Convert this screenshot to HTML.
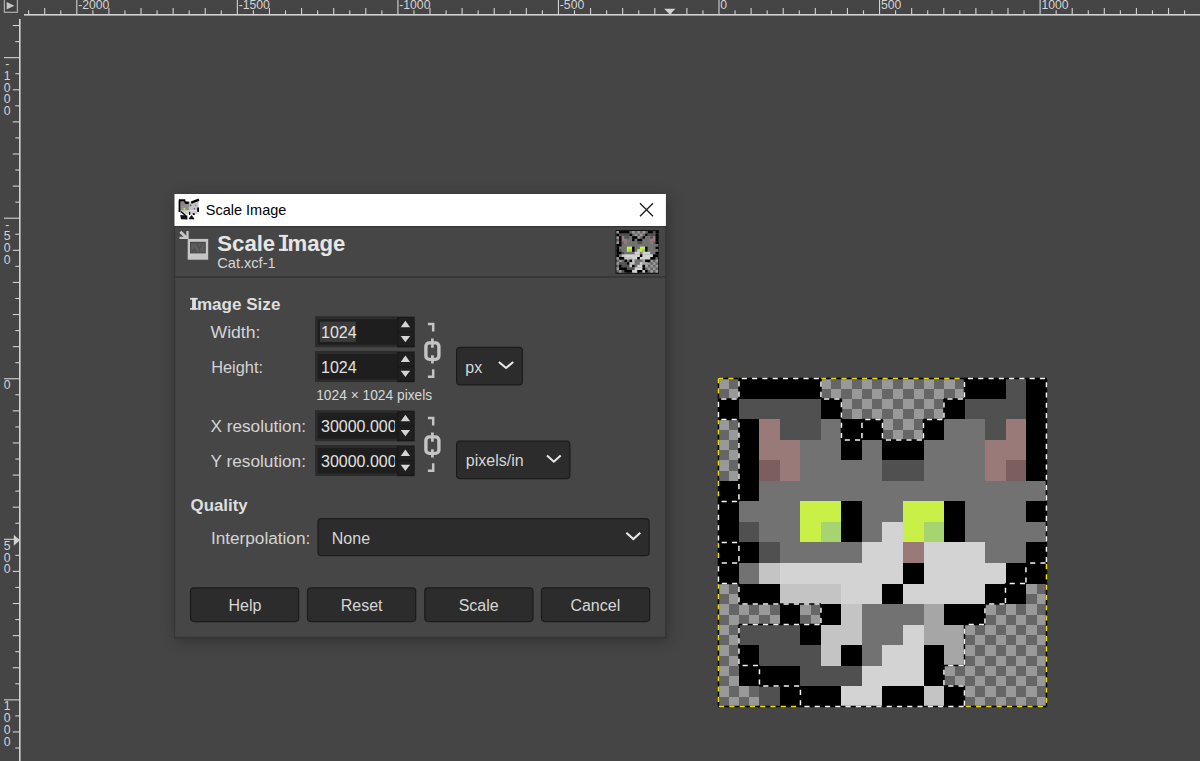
<!DOCTYPE html><html><head><meta charset="utf-8"><title>GIMP Scale Image</title><style>
html,body{margin:0;padding:0;}
body{width:1200px;height:761px;overflow:hidden;background:#454545;position:relative;font-family:"Liberation Sans", sans-serif;}
svg{position:absolute;left:0;top:0;}
.rl{font-size:12.2px;fill:#d4d4d4;font-family:"Liberation Sans", sans-serif;}
.rv{font-size:12.2px;fill:#d4d4d4;font-family:"Liberation Sans", sans-serif;text-anchor:middle;}
.shadow{position:absolute;left:174px;top:194px;width:492px;height:444px;box-shadow:2px 3px 14px rgba(0,0,0,0.28);}
</style></head><body><svg class="rulers" width="1200" height="761"><rect x="24" y="14" width="1176" height="1.6" fill="#d2d2d2"/><rect x="19" y="19" width="1.6" height="742" fill="#d2d2d2"/><rect x="28.09" y="10.3" width="1.1" height="4.20" fill="#d2d2d2"/><rect x="44.14" y="8" width="1.1" height="6.50" fill="#d2d2d2"/><rect x="60.20" y="10.3" width="1.1" height="4.20" fill="#d2d2d2"/><rect x="76.25" y="0" width="1.1" height="14.50" fill="#d2d2d2"/><text x="78.15" y="9.3" class="rl">-2000</text><rect x="92.31" y="10.3" width="1.1" height="4.20" fill="#d2d2d2"/><rect x="108.36" y="8" width="1.1" height="6.50" fill="#d2d2d2"/><rect x="124.42" y="10.3" width="1.1" height="4.20" fill="#d2d2d2"/><rect x="140.47" y="8" width="1.1" height="6.50" fill="#d2d2d2"/><rect x="156.53" y="10.3" width="1.1" height="4.20" fill="#d2d2d2"/><rect x="172.58" y="8" width="1.1" height="6.50" fill="#d2d2d2"/><rect x="188.64" y="10.3" width="1.1" height="4.20" fill="#d2d2d2"/><rect x="204.69" y="8" width="1.1" height="6.50" fill="#d2d2d2"/><rect x="220.75" y="10.3" width="1.1" height="4.20" fill="#d2d2d2"/><rect x="236.80" y="0" width="1.1" height="14.50" fill="#d2d2d2"/><text x="238.70" y="9.3" class="rl">-1500</text><rect x="252.86" y="10.3" width="1.1" height="4.20" fill="#d2d2d2"/><rect x="268.91" y="8" width="1.1" height="6.50" fill="#d2d2d2"/><rect x="284.97" y="10.3" width="1.1" height="4.20" fill="#d2d2d2"/><rect x="301.02" y="8" width="1.1" height="6.50" fill="#d2d2d2"/><rect x="317.08" y="10.3" width="1.1" height="4.20" fill="#d2d2d2"/><rect x="333.13" y="8" width="1.1" height="6.50" fill="#d2d2d2"/><rect x="349.19" y="10.3" width="1.1" height="4.20" fill="#d2d2d2"/><rect x="365.24" y="8" width="1.1" height="6.50" fill="#d2d2d2"/><rect x="381.30" y="10.3" width="1.1" height="4.20" fill="#d2d2d2"/><rect x="397.35" y="0" width="1.1" height="14.50" fill="#d2d2d2"/><text x="399.25" y="9.3" class="rl">-1000</text><rect x="413.41" y="10.3" width="1.1" height="4.20" fill="#d2d2d2"/><rect x="429.46" y="8" width="1.1" height="6.50" fill="#d2d2d2"/><rect x="445.52" y="10.3" width="1.1" height="4.20" fill="#d2d2d2"/><rect x="461.57" y="8" width="1.1" height="6.50" fill="#d2d2d2"/><rect x="477.63" y="10.3" width="1.1" height="4.20" fill="#d2d2d2"/><rect x="493.68" y="8" width="1.1" height="6.50" fill="#d2d2d2"/><rect x="509.74" y="10.3" width="1.1" height="4.20" fill="#d2d2d2"/><rect x="525.79" y="8" width="1.1" height="6.50" fill="#d2d2d2"/><rect x="541.85" y="10.3" width="1.1" height="4.20" fill="#d2d2d2"/><rect x="557.90" y="0" width="1.1" height="14.50" fill="#d2d2d2"/><text x="559.80" y="9.3" class="rl">-500</text><rect x="573.96" y="10.3" width="1.1" height="4.20" fill="#d2d2d2"/><rect x="590.01" y="8" width="1.1" height="6.50" fill="#d2d2d2"/><rect x="606.07" y="10.3" width="1.1" height="4.20" fill="#d2d2d2"/><rect x="622.12" y="8" width="1.1" height="6.50" fill="#d2d2d2"/><rect x="638.18" y="10.3" width="1.1" height="4.20" fill="#d2d2d2"/><rect x="654.23" y="8" width="1.1" height="6.50" fill="#d2d2d2"/><rect x="670.29" y="10.3" width="1.1" height="4.20" fill="#d2d2d2"/><rect x="686.34" y="8" width="1.1" height="6.50" fill="#d2d2d2"/><rect x="702.40" y="10.3" width="1.1" height="4.20" fill="#d2d2d2"/><rect x="718.45" y="0" width="1.1" height="14.50" fill="#d2d2d2"/><text x="720.35" y="9.3" class="rl">0</text><rect x="734.50" y="10.3" width="1.1" height="4.20" fill="#d2d2d2"/><rect x="750.56" y="8" width="1.1" height="6.50" fill="#d2d2d2"/><rect x="766.62" y="10.3" width="1.1" height="4.20" fill="#d2d2d2"/><rect x="782.67" y="8" width="1.1" height="6.50" fill="#d2d2d2"/><rect x="798.73" y="10.3" width="1.1" height="4.20" fill="#d2d2d2"/><rect x="814.78" y="8" width="1.1" height="6.50" fill="#d2d2d2"/><rect x="830.84" y="10.3" width="1.1" height="4.20" fill="#d2d2d2"/><rect x="846.89" y="8" width="1.1" height="6.50" fill="#d2d2d2"/><rect x="862.95" y="10.3" width="1.1" height="4.20" fill="#d2d2d2"/><rect x="879.00" y="0" width="1.1" height="14.50" fill="#d2d2d2"/><text x="880.90" y="9.3" class="rl">500</text><rect x="895.06" y="10.3" width="1.1" height="4.20" fill="#d2d2d2"/><rect x="911.11" y="8" width="1.1" height="6.50" fill="#d2d2d2"/><rect x="927.17" y="10.3" width="1.1" height="4.20" fill="#d2d2d2"/><rect x="943.22" y="8" width="1.1" height="6.50" fill="#d2d2d2"/><rect x="959.28" y="10.3" width="1.1" height="4.20" fill="#d2d2d2"/><rect x="975.33" y="8" width="1.1" height="6.50" fill="#d2d2d2"/><rect x="991.38" y="10.3" width="1.1" height="4.20" fill="#d2d2d2"/><rect x="1007.44" y="8" width="1.1" height="6.50" fill="#d2d2d2"/><rect x="1023.50" y="10.3" width="1.1" height="4.20" fill="#d2d2d2"/><rect x="1039.55" y="0" width="1.1" height="14.50" fill="#d2d2d2"/><text x="1041.45" y="9.3" class="rl">1000</text><rect x="1055.61" y="10.3" width="1.1" height="4.20" fill="#d2d2d2"/><rect x="1071.66" y="8" width="1.1" height="6.50" fill="#d2d2d2"/><rect x="1087.72" y="10.3" width="1.1" height="4.20" fill="#d2d2d2"/><rect x="1103.77" y="8" width="1.1" height="6.50" fill="#d2d2d2"/><rect x="1119.83" y="10.3" width="1.1" height="4.20" fill="#d2d2d2"/><rect x="1135.88" y="8" width="1.1" height="6.50" fill="#d2d2d2"/><rect x="1151.93" y="10.3" width="1.1" height="4.20" fill="#d2d2d2"/><rect x="1167.99" y="8" width="1.1" height="6.50" fill="#d2d2d2"/><rect x="1184.05" y="10.3" width="1.1" height="4.20" fill="#d2d2d2"/><rect x="12.8" y="24.99" width="6.70" height="1.1" fill="#d2d2d2"/><rect x="15.3" y="41.05" width="4.20" height="1.1" fill="#d2d2d2"/><rect x="4" y="57.10" width="15.50" height="1.1" fill="#d2d2d2"/><text x="7.2" y="68.20" class="rv">-</text><text x="7.2" y="79.90" class="rv">1</text><text x="7.2" y="91.60" class="rv">0</text><text x="7.2" y="103.30" class="rv">0</text><text x="7.2" y="115.00" class="rv">0</text><rect x="15.3" y="73.15" width="4.20" height="1.1" fill="#d2d2d2"/><rect x="12.8" y="89.21" width="6.70" height="1.1" fill="#d2d2d2"/><rect x="15.3" y="105.26" width="4.20" height="1.1" fill="#d2d2d2"/><rect x="12.8" y="121.32" width="6.70" height="1.1" fill="#d2d2d2"/><rect x="15.3" y="137.38" width="4.20" height="1.1" fill="#d2d2d2"/><rect x="12.8" y="153.43" width="6.70" height="1.1" fill="#d2d2d2"/><rect x="15.3" y="169.48" width="4.20" height="1.1" fill="#d2d2d2"/><rect x="12.8" y="185.54" width="6.70" height="1.1" fill="#d2d2d2"/><rect x="15.3" y="201.59" width="4.20" height="1.1" fill="#d2d2d2"/><rect x="4" y="217.65" width="15.50" height="1.1" fill="#d2d2d2"/><text x="7.2" y="228.75" class="rv">-</text><text x="7.2" y="240.45" class="rv">5</text><text x="7.2" y="252.15" class="rv">0</text><text x="7.2" y="263.85" class="rv">0</text><rect x="15.3" y="233.70" width="4.20" height="1.1" fill="#d2d2d2"/><rect x="12.8" y="249.76" width="6.70" height="1.1" fill="#d2d2d2"/><rect x="15.3" y="265.81" width="4.20" height="1.1" fill="#d2d2d2"/><rect x="12.8" y="281.87" width="6.70" height="1.1" fill="#d2d2d2"/><rect x="15.3" y="297.92" width="4.20" height="1.1" fill="#d2d2d2"/><rect x="12.8" y="313.98" width="6.70" height="1.1" fill="#d2d2d2"/><rect x="15.3" y="330.03" width="4.20" height="1.1" fill="#d2d2d2"/><rect x="12.8" y="346.09" width="6.70" height="1.1" fill="#d2d2d2"/><rect x="15.3" y="362.14" width="4.20" height="1.1" fill="#d2d2d2"/><rect x="4" y="378.20" width="15.50" height="1.1" fill="#d2d2d2"/><text x="7.2" y="389.30" class="rv">0</text><rect x="15.3" y="394.25" width="4.20" height="1.1" fill="#d2d2d2"/><rect x="12.8" y="410.31" width="6.70" height="1.1" fill="#d2d2d2"/><rect x="15.3" y="426.37" width="4.20" height="1.1" fill="#d2d2d2"/><rect x="12.8" y="442.42" width="6.70" height="1.1" fill="#d2d2d2"/><rect x="15.3" y="458.48" width="4.20" height="1.1" fill="#d2d2d2"/><rect x="12.8" y="474.53" width="6.70" height="1.1" fill="#d2d2d2"/><rect x="15.3" y="490.58" width="4.20" height="1.1" fill="#d2d2d2"/><rect x="12.8" y="506.64" width="6.70" height="1.1" fill="#d2d2d2"/><rect x="15.3" y="522.69" width="4.20" height="1.1" fill="#d2d2d2"/><rect x="4" y="538.75" width="15.50" height="1.1" fill="#d2d2d2"/><text x="7.2" y="549.85" class="rv">5</text><text x="7.2" y="561.55" class="rv">0</text><text x="7.2" y="573.25" class="rv">0</text><rect x="15.3" y="554.80" width="4.20" height="1.1" fill="#d2d2d2"/><rect x="12.8" y="570.86" width="6.70" height="1.1" fill="#d2d2d2"/><rect x="15.3" y="586.91" width="4.20" height="1.1" fill="#d2d2d2"/><rect x="12.8" y="602.97" width="6.70" height="1.1" fill="#d2d2d2"/><rect x="15.3" y="619.02" width="4.20" height="1.1" fill="#d2d2d2"/><rect x="12.8" y="635.08" width="6.70" height="1.1" fill="#d2d2d2"/><rect x="15.3" y="651.13" width="4.20" height="1.1" fill="#d2d2d2"/><rect x="12.8" y="667.19" width="6.70" height="1.1" fill="#d2d2d2"/><rect x="15.3" y="683.25" width="4.20" height="1.1" fill="#d2d2d2"/><rect x="4" y="699.30" width="15.50" height="1.1" fill="#d2d2d2"/><text x="7.2" y="710.40" class="rv">1</text><text x="7.2" y="722.10" class="rv">0</text><text x="7.2" y="733.80" class="rv">0</text><text x="7.2" y="745.50" class="rv">0</text><rect x="15.3" y="715.36" width="4.20" height="1.1" fill="#d2d2d2"/><rect x="12.8" y="731.41" width="6.70" height="1.1" fill="#d2d2d2"/><rect x="15.3" y="747.46" width="4.20" height="1.1" fill="#d2d2d2"/><polygon points="664.2,8.8 675.4,8.8 669.8,14.6" fill="#d2d2d2"/><polygon points="13.8,534.8 13.8,545.7 19.8,540.25" fill="#d2d2d2"/><rect x="4.4" y="-2" width="13" height="14.3" fill="#404040" stroke="#a8a8a8" stroke-width="1.3"/><polygon points="6.6,2 6.6,9.6 14.4,5.8" fill="#c4c4c4"/></svg><svg class="cat" style="left:715px;top:375px" width="335" height="335" ><g shape-rendering="crispEdges"><rect x="3" y="3" width="21" height="21" fill="#666"/><rect x="3" y="3" width="10.5" height="10.5" fill="#999"/><rect x="13.5" y="13.5" width="10.5" height="10.5" fill="#999"/><rect x="106" y="3" width="20" height="21" fill="#666"/><rect x="106" y="3" width="10.0" height="10.5" fill="#999"/><rect x="116.0" y="13.5" width="10.0" height="10.5" fill="#999"/><rect x="126" y="3" width="21" height="21" fill="#666"/><rect x="126" y="3" width="10.5" height="10.5" fill="#999"/><rect x="136.5" y="13.5" width="10.5" height="10.5" fill="#999"/><rect x="147" y="3" width="20" height="21" fill="#666"/><rect x="147" y="3" width="10.0" height="10.5" fill="#999"/><rect x="157.0" y="13.5" width="10.0" height="10.5" fill="#999"/><rect x="167" y="3" width="21" height="21" fill="#666"/><rect x="167" y="3" width="10.5" height="10.5" fill="#999"/><rect x="177.5" y="13.5" width="10.5" height="10.5" fill="#999"/><rect x="188" y="3" width="21" height="21" fill="#666"/><rect x="188" y="3" width="10.5" height="10.5" fill="#999"/><rect x="198.5" y="13.5" width="10.5" height="10.5" fill="#999"/><rect x="209" y="3" width="20" height="21" fill="#666"/><rect x="209" y="3" width="10.0" height="10.5" fill="#999"/><rect x="219.0" y="13.5" width="10.0" height="10.5" fill="#999"/><rect x="229" y="3" width="21" height="21" fill="#666"/><rect x="229" y="3" width="10.5" height="10.5" fill="#999"/><rect x="239.5" y="13.5" width="10.5" height="10.5" fill="#999"/><rect x="126" y="24" width="21" height="20" fill="#666"/><rect x="126" y="24" width="10.5" height="10.0" fill="#999"/><rect x="136.5" y="34.0" width="10.5" height="10.0" fill="#999"/><rect x="147" y="24" width="20" height="20" fill="#666"/><rect x="147" y="24" width="10.0" height="10.0" fill="#999"/><rect x="157.0" y="34.0" width="10.0" height="10.0" fill="#999"/><rect x="167" y="24" width="21" height="20" fill="#666"/><rect x="167" y="24" width="10.5" height="10.0" fill="#999"/><rect x="177.5" y="34.0" width="10.5" height="10.0" fill="#999"/><rect x="188" y="24" width="21" height="20" fill="#666"/><rect x="188" y="24" width="10.5" height="10.0" fill="#999"/><rect x="198.5" y="34.0" width="10.5" height="10.0" fill="#999"/><rect x="209" y="24" width="20" height="20" fill="#666"/><rect x="209" y="24" width="10.0" height="10.0" fill="#999"/><rect x="219.0" y="34.0" width="10.0" height="10.0" fill="#999"/><rect x="3" y="44" width="21" height="21" fill="#666"/><rect x="3" y="44" width="10.5" height="10.5" fill="#999"/><rect x="13.5" y="54.5" width="10.5" height="10.5" fill="#999"/><rect x="167" y="44" width="21" height="21" fill="#666"/><rect x="167" y="44" width="10.5" height="10.5" fill="#999"/><rect x="177.5" y="54.5" width="10.5" height="10.5" fill="#999"/><rect x="188" y="44" width="21" height="21" fill="#666"/><rect x="188" y="44" width="10.5" height="10.5" fill="#999"/><rect x="198.5" y="54.5" width="10.5" height="10.5" fill="#999"/><rect x="3" y="65" width="21" height="20" fill="#666"/><rect x="3" y="65" width="10.5" height="10.0" fill="#999"/><rect x="13.5" y="75.0" width="10.5" height="10.0" fill="#999"/><rect x="3" y="85" width="21" height="21" fill="#666"/><rect x="3" y="85" width="10.5" height="10.5" fill="#999"/><rect x="13.5" y="95.5" width="10.5" height="10.5" fill="#999"/><rect x="3" y="209" width="21" height="20" fill="#666"/><rect x="3" y="209" width="10.5" height="10.0" fill="#999"/><rect x="13.5" y="219.0" width="10.5" height="10.0" fill="#999"/><rect x="311" y="209" width="21" height="20" fill="#666"/><rect x="311" y="209" width="10.5" height="10.0" fill="#999"/><rect x="321.5" y="219.0" width="10.5" height="10.0" fill="#999"/><rect x="3" y="229" width="21" height="21" fill="#666"/><rect x="3" y="229" width="10.5" height="10.5" fill="#999"/><rect x="13.5" y="239.5" width="10.5" height="10.5" fill="#999"/><rect x="24" y="229" width="20" height="21" fill="#666"/><rect x="24" y="229" width="10.0" height="10.5" fill="#999"/><rect x="34.0" y="239.5" width="10.0" height="10.5" fill="#999"/><rect x="44" y="229" width="21" height="21" fill="#666"/><rect x="44" y="229" width="10.5" height="10.5" fill="#999"/><rect x="54.5" y="239.5" width="10.5" height="10.5" fill="#999"/><rect x="85" y="229" width="21" height="21" fill="#666"/><rect x="85" y="229" width="10.5" height="10.5" fill="#999"/><rect x="95.5" y="239.5" width="10.5" height="10.5" fill="#999"/><rect x="270" y="229" width="21" height="21" fill="#666"/><rect x="270" y="229" width="10.5" height="10.5" fill="#999"/><rect x="280.5" y="239.5" width="10.5" height="10.5" fill="#999"/><rect x="291" y="229" width="20" height="21" fill="#666"/><rect x="291" y="229" width="10.0" height="10.5" fill="#999"/><rect x="301.0" y="239.5" width="10.0" height="10.5" fill="#999"/><rect x="311" y="229" width="21" height="21" fill="#666"/><rect x="311" y="229" width="10.5" height="10.5" fill="#999"/><rect x="321.5" y="239.5" width="10.5" height="10.5" fill="#999"/><rect x="3" y="250" width="21" height="20" fill="#666"/><rect x="3" y="250" width="10.5" height="10.0" fill="#999"/><rect x="13.5" y="260.0" width="10.5" height="10.0" fill="#999"/><rect x="250" y="250" width="20" height="20" fill="#666"/><rect x="250" y="250" width="10.0" height="10.0" fill="#999"/><rect x="260.0" y="260.0" width="10.0" height="10.0" fill="#999"/><rect x="270" y="250" width="21" height="20" fill="#666"/><rect x="270" y="250" width="10.5" height="10.0" fill="#999"/><rect x="280.5" y="260.0" width="10.5" height="10.0" fill="#999"/><rect x="291" y="250" width="20" height="20" fill="#666"/><rect x="291" y="250" width="10.0" height="10.0" fill="#999"/><rect x="301.0" y="260.0" width="10.0" height="10.0" fill="#999"/><rect x="311" y="250" width="21" height="20" fill="#666"/><rect x="311" y="250" width="10.5" height="10.0" fill="#999"/><rect x="321.5" y="260.0" width="10.5" height="10.0" fill="#999"/><rect x="3" y="270" width="21" height="21" fill="#666"/><rect x="3" y="270" width="10.5" height="10.5" fill="#999"/><rect x="13.5" y="280.5" width="10.5" height="10.5" fill="#999"/><rect x="250" y="270" width="20" height="21" fill="#666"/><rect x="250" y="270" width="10.0" height="10.5" fill="#999"/><rect x="260.0" y="280.5" width="10.0" height="10.5" fill="#999"/><rect x="270" y="270" width="21" height="21" fill="#666"/><rect x="270" y="270" width="10.5" height="10.5" fill="#999"/><rect x="280.5" y="280.5" width="10.5" height="10.5" fill="#999"/><rect x="291" y="270" width="20" height="21" fill="#666"/><rect x="291" y="270" width="10.0" height="10.5" fill="#999"/><rect x="301.0" y="280.5" width="10.0" height="10.5" fill="#999"/><rect x="311" y="270" width="21" height="21" fill="#666"/><rect x="311" y="270" width="10.5" height="10.5" fill="#999"/><rect x="321.5" y="280.5" width="10.5" height="10.5" fill="#999"/><rect x="3" y="291" width="21" height="20" fill="#666"/><rect x="3" y="291" width="10.5" height="10.0" fill="#999"/><rect x="13.5" y="301.0" width="10.5" height="10.0" fill="#999"/><rect x="229" y="291" width="21" height="20" fill="#666"/><rect x="229" y="291" width="10.5" height="10.0" fill="#999"/><rect x="239.5" y="301.0" width="10.5" height="10.0" fill="#999"/><rect x="250" y="291" width="20" height="20" fill="#666"/><rect x="250" y="291" width="10.0" height="10.0" fill="#999"/><rect x="260.0" y="301.0" width="10.0" height="10.0" fill="#999"/><rect x="270" y="291" width="21" height="20" fill="#666"/><rect x="270" y="291" width="10.5" height="10.0" fill="#999"/><rect x="280.5" y="301.0" width="10.5" height="10.0" fill="#999"/><rect x="291" y="291" width="20" height="20" fill="#666"/><rect x="291" y="291" width="10.0" height="10.0" fill="#999"/><rect x="301.0" y="301.0" width="10.0" height="10.0" fill="#999"/><rect x="311" y="291" width="21" height="20" fill="#666"/><rect x="311" y="291" width="10.5" height="10.0" fill="#999"/><rect x="321.5" y="301.0" width="10.5" height="10.0" fill="#999"/><rect x="3" y="311" width="21" height="21" fill="#666"/><rect x="3" y="311" width="10.5" height="10.5" fill="#999"/><rect x="13.5" y="321.5" width="10.5" height="10.5" fill="#999"/><rect x="24" y="311" width="20" height="21" fill="#666"/><rect x="24" y="311" width="10.0" height="10.5" fill="#999"/><rect x="34.0" y="321.5" width="10.0" height="10.5" fill="#999"/><rect x="250" y="311" width="20" height="21" fill="#666"/><rect x="250" y="311" width="10.0" height="10.5" fill="#999"/><rect x="260.0" y="321.5" width="10.0" height="10.5" fill="#999"/><rect x="270" y="311" width="21" height="21" fill="#666"/><rect x="270" y="311" width="10.5" height="10.5" fill="#999"/><rect x="280.5" y="321.5" width="10.5" height="10.5" fill="#999"/><rect x="291" y="311" width="20" height="21" fill="#666"/><rect x="291" y="311" width="10.0" height="10.5" fill="#999"/><rect x="301.0" y="321.5" width="10.0" height="10.5" fill="#999"/><rect x="311" y="311" width="21" height="21" fill="#666"/><rect x="311" y="311" width="10.5" height="10.5" fill="#999"/><rect x="321.5" y="321.5" width="10.5" height="10.5" fill="#999"/><rect x="24" y="3" width="82" height="21" fill="#000000"/><rect x="250" y="3" width="41" height="21" fill="#000000"/><rect x="291" y="3" width="20" height="21" fill="#505050"/><rect x="311" y="3" width="21" height="21" fill="#000000"/><rect x="3" y="24" width="21" height="20" fill="#000000"/><rect x="24" y="24" width="82" height="20" fill="#505050"/><rect x="106" y="24" width="20" height="20" fill="#000000"/><rect x="229" y="24" width="21" height="20" fill="#000000"/><rect x="250" y="24" width="61" height="20" fill="#505050"/><rect x="311" y="24" width="21" height="20" fill="#000000"/><rect x="24" y="44" width="20" height="21" fill="#000000"/><rect x="44" y="44" width="21" height="21" fill="#9a7a78"/><rect x="65" y="44" width="41" height="21" fill="#505050"/><rect x="106" y="44" width="20" height="21" fill="#727272"/><rect x="126" y="44" width="41" height="21" fill="#000000"/><rect x="209" y="44" width="20" height="21" fill="#000000"/><rect x="229" y="44" width="41" height="21" fill="#727272"/><rect x="270" y="44" width="21" height="21" fill="#505050"/><rect x="291" y="44" width="20" height="21" fill="#9a7a78"/><rect x="311" y="44" width="21" height="21" fill="#000000"/><rect x="24" y="65" width="20" height="20" fill="#000000"/><rect x="44" y="65" width="41" height="20" fill="#9a7a78"/><rect x="85" y="65" width="41" height="20" fill="#727272"/><rect x="126" y="65" width="21" height="20" fill="#000000"/><rect x="147" y="65" width="20" height="20" fill="#727272"/><rect x="167" y="65" width="42" height="20" fill="#000000"/><rect x="209" y="65" width="61" height="20" fill="#727272"/><rect x="270" y="65" width="41" height="20" fill="#9a7a78"/><rect x="311" y="65" width="21" height="20" fill="#000000"/><rect x="24" y="85" width="20" height="21" fill="#000000"/><rect x="44" y="85" width="21" height="21" fill="#7c5e5e"/><rect x="65" y="85" width="20" height="21" fill="#9a7a78"/><rect x="85" y="85" width="82" height="21" fill="#727272"/><rect x="167" y="85" width="42" height="21" fill="#505050"/><rect x="209" y="85" width="61" height="21" fill="#727272"/><rect x="270" y="85" width="21" height="21" fill="#9a7a78"/><rect x="291" y="85" width="20" height="21" fill="#7c5e5e"/><rect x="311" y="85" width="21" height="21" fill="#000000"/><rect x="3" y="106" width="41" height="20" fill="#000000"/><rect x="44" y="106" width="288" height="20" fill="#727272"/><rect x="3" y="126" width="21" height="21" fill="#000000"/><rect x="24" y="126" width="61" height="21" fill="#727272"/><rect x="85" y="126" width="41" height="21" fill="#c8f046"/><rect x="126" y="126" width="21" height="21" fill="#000000"/><rect x="147" y="126" width="41" height="21" fill="#727272"/><rect x="188" y="126" width="41" height="21" fill="#c8f046"/><rect x="229" y="126" width="21" height="21" fill="#000000"/><rect x="250" y="126" width="61" height="21" fill="#727272"/><rect x="311" y="126" width="21" height="21" fill="#000000"/><rect x="3" y="147" width="21" height="20" fill="#000000"/><rect x="24" y="147" width="20" height="20" fill="#505050"/><rect x="44" y="147" width="41" height="20" fill="#727272"/><rect x="85" y="147" width="21" height="20" fill="#c8f046"/><rect x="106" y="147" width="20" height="20" fill="#a6d470"/><rect x="126" y="147" width="21" height="20" fill="#000000"/><rect x="147" y="147" width="20" height="20" fill="#727272"/><rect x="167" y="147" width="21" height="20" fill="#d3d3d3"/><rect x="188" y="147" width="21" height="20" fill="#c8f046"/><rect x="209" y="147" width="20" height="20" fill="#a6d470"/><rect x="229" y="147" width="21" height="20" fill="#000000"/><rect x="250" y="147" width="82" height="20" fill="#727272"/><rect x="3" y="167" width="41" height="21" fill="#000000"/><rect x="44" y="167" width="21" height="21" fill="#505050"/><rect x="65" y="167" width="82" height="21" fill="#727272"/><rect x="147" y="167" width="41" height="21" fill="#d3d3d3"/><rect x="188" y="167" width="21" height="21" fill="#9a7a78"/><rect x="209" y="167" width="61" height="21" fill="#d3d3d3"/><rect x="270" y="167" width="41" height="21" fill="#727272"/><rect x="311" y="167" width="21" height="21" fill="#000000"/><rect x="3" y="188" width="21" height="21" fill="#000000"/><rect x="24" y="188" width="20" height="21" fill="#727272"/><rect x="44" y="188" width="21" height="21" fill="#c4c4c4"/><rect x="65" y="188" width="123" height="21" fill="#d3d3d3"/><rect x="188" y="188" width="21" height="21" fill="#000000"/><rect x="209" y="188" width="82" height="21" fill="#d3d3d3"/><rect x="291" y="188" width="41" height="21" fill="#000000"/><rect x="24" y="209" width="41" height="20" fill="#000000"/><rect x="65" y="209" width="61" height="20" fill="#c4c4c4"/><rect x="126" y="209" width="41" height="20" fill="#d3d3d3"/><rect x="167" y="209" width="21" height="20" fill="#000000"/><rect x="188" y="209" width="82" height="20" fill="#d3d3d3"/><rect x="270" y="209" width="41" height="20" fill="#000000"/><rect x="65" y="229" width="20" height="21" fill="#000000"/><rect x="106" y="229" width="20" height="21" fill="#000000"/><rect x="126" y="229" width="21" height="21" fill="#c4c4c4"/><rect x="147" y="229" width="62" height="21" fill="#727272"/><rect x="209" y="229" width="20" height="21" fill="#a6a6a6"/><rect x="229" y="229" width="41" height="21" fill="#000000"/><rect x="24" y="250" width="61" height="20" fill="#505050"/><rect x="85" y="250" width="21" height="20" fill="#000000"/><rect x="106" y="250" width="41" height="20" fill="#c4c4c4"/><rect x="147" y="250" width="41" height="20" fill="#727272"/><rect x="188" y="250" width="21" height="20" fill="#d3d3d3"/><rect x="209" y="250" width="41" height="20" fill="#a6a6a6"/><rect x="24" y="270" width="20" height="21" fill="#000000"/><rect x="44" y="270" width="62" height="21" fill="#505050"/><rect x="106" y="270" width="20" height="21" fill="#c4c4c4"/><rect x="126" y="270" width="21" height="21" fill="#000000"/><rect x="147" y="270" width="20" height="21" fill="#727272"/><rect x="167" y="270" width="42" height="21" fill="#d3d3d3"/><rect x="209" y="270" width="20" height="21" fill="#000000"/><rect x="229" y="270" width="21" height="21" fill="#a6a6a6"/><rect x="24" y="291" width="61" height="20" fill="#000000"/><rect x="85" y="291" width="62" height="20" fill="#505050"/><rect x="147" y="291" width="62" height="20" fill="#d3d3d3"/><rect x="209" y="291" width="20" height="20" fill="#000000"/><rect x="44" y="311" width="21" height="21" fill="#505050"/><rect x="65" y="311" width="61" height="21" fill="#000000"/><rect x="126" y="311" width="41" height="21" fill="#d3d3d3"/><rect x="167" y="311" width="42" height="21" fill="#000000"/><rect x="209" y="311" width="20" height="21" fill="#c4c4c4"/><rect x="229" y="311" width="21" height="21" fill="#000000"/></g><g><path d="M3.45 3.45L23.95 3.45M105.95 3.45L126.45 3.45M126.45 3.45L146.95 3.45M146.95 3.45L167.45 3.45M167.45 3.45L187.95 3.45M187.95 3.45L208.45 3.45M208.45 3.45L228.95 3.45M228.95 3.45L249.45 3.45M3.45 331.45L23.95 331.45M23.95 331.45L44.45 331.45M44.45 331.45L64.95 331.45M64.95 331.45L85.45 331.45M249.45 331.45L269.95 331.45M269.95 331.45L290.45 331.45M290.45 331.45L310.95 331.45M310.95 331.45L331.45 331.45M3.45 3.45L3.45 23.95M3.45 44.45L3.45 64.95M3.45 64.95L3.45 85.45M3.45 85.45L3.45 105.95M3.45 105.95L3.45 126.45M3.45 167.45L3.45 187.95M3.45 208.45L3.45 228.95M3.45 228.95L3.45 249.45M3.45 249.45L3.45 269.95M3.45 269.95L3.45 290.45M3.45 290.45L3.45 310.95M3.45 310.95L3.45 331.45M331.45 187.95L331.45 208.45M331.45 208.45L331.45 228.95M331.45 228.95L331.45 249.45M331.45 249.45L331.45 269.95M331.45 269.95L331.45 290.45M331.45 290.45L331.45 310.95M331.45 310.95L331.45 331.45" stroke="#000" stroke-width="1.5" fill="none"/><path d="M3.45 3.45L23.95 3.45M3.45 3.45L3.45 23.95" stroke="#f0e000" stroke-width="1.5" stroke-dasharray="5.14 5.14" stroke-dashoffset="0.38" fill="none"/><path d="M105.95 3.45L126.45 3.45M3.45 105.95L3.45 126.45" stroke="#f0e000" stroke-width="1.5" stroke-dasharray="5.14 5.14" stroke-dashoffset="0.08" fill="none"/><path d="M126.45 3.45L146.95 3.45" stroke="#f0e000" stroke-width="1.5" stroke-dasharray="5.14 5.14" stroke-dashoffset="0.02" fill="none"/><path d="M146.95 3.45L167.45 3.45" stroke="#f0e000" stroke-width="1.5" stroke-dasharray="5.14 5.14" stroke-dashoffset="10.24" fill="none"/><path d="M167.45 3.45L187.95 3.45M3.45 167.45L3.45 187.95" stroke="#f0e000" stroke-width="1.5" stroke-dasharray="5.14 5.14" stroke-dashoffset="10.18" fill="none"/><path d="M187.95 3.45L208.45 3.45" stroke="#f0e000" stroke-width="1.5" stroke-dasharray="5.14 5.14" stroke-dashoffset="10.12" fill="none"/><path d="M208.45 3.45L228.95 3.45M3.45 208.45L3.45 228.95" stroke="#f0e000" stroke-width="1.5" stroke-dasharray="5.14 5.14" stroke-dashoffset="10.06" fill="none"/><path d="M228.95 3.45L249.45 3.45M3.45 228.95L3.45 249.45" stroke="#f0e000" stroke-width="1.5" stroke-dasharray="5.14 5.14" stroke-dashoffset="10.0" fill="none"/><path d="M3.45 331.45L23.95 331.45" stroke="#f0e000" stroke-width="1.5" stroke-dasharray="5.14 5.14" stroke-dashoffset="9.7" fill="none"/><path d="M23.95 331.45L44.45 331.45" stroke="#f0e000" stroke-width="1.5" stroke-dasharray="5.14 5.14" stroke-dashoffset="9.64" fill="none"/><path d="M44.45 331.45L64.95 331.45" stroke="#f0e000" stroke-width="1.5" stroke-dasharray="5.14 5.14" stroke-dashoffset="9.58" fill="none"/><path d="M64.95 331.45L85.45 331.45" stroke="#f0e000" stroke-width="1.5" stroke-dasharray="5.14 5.14" stroke-dashoffset="9.52" fill="none"/><path d="M249.45 331.45L269.95 331.45M331.45 249.45L331.45 269.95" stroke="#f0e000" stroke-width="1.5" stroke-dasharray="5.14 5.14" stroke-dashoffset="8.98" fill="none"/><path d="M269.95 331.45L290.45 331.45M331.45 269.95L331.45 290.45" stroke="#f0e000" stroke-width="1.5" stroke-dasharray="5.14 5.14" stroke-dashoffset="8.92" fill="none"/><path d="M290.45 331.45L310.95 331.45M331.45 290.45L331.45 310.95" stroke="#f0e000" stroke-width="1.5" stroke-dasharray="5.14 5.14" stroke-dashoffset="8.86" fill="none"/><path d="M310.95 331.45L331.45 331.45M331.45 310.95L331.45 331.45" stroke="#f0e000" stroke-width="1.5" stroke-dasharray="5.14 5.14" stroke-dashoffset="8.8" fill="none"/><path d="M3.45 44.45L3.45 64.95" stroke="#f0e000" stroke-width="1.5" stroke-dasharray="5.14 5.14" stroke-dashoffset="0.26" fill="none"/><path d="M3.45 64.95L3.45 85.45" stroke="#f0e000" stroke-width="1.5" stroke-dasharray="5.14 5.14" stroke-dashoffset="0.2" fill="none"/><path d="M3.45 85.45L3.45 105.95" stroke="#f0e000" stroke-width="1.5" stroke-dasharray="5.14 5.14" stroke-dashoffset="0.14" fill="none"/><path d="M3.45 249.45L3.45 269.95" stroke="#f0e000" stroke-width="1.5" stroke-dasharray="5.14 5.14" stroke-dashoffset="9.94" fill="none"/><path d="M3.45 269.95L3.45 290.45" stroke="#f0e000" stroke-width="1.5" stroke-dasharray="5.14 5.14" stroke-dashoffset="9.88" fill="none"/><path d="M3.45 290.45L3.45 310.95" stroke="#f0e000" stroke-width="1.5" stroke-dasharray="5.14 5.14" stroke-dashoffset="9.82" fill="none"/><path d="M3.45 310.95L3.45 331.45" stroke="#f0e000" stroke-width="1.5" stroke-dasharray="5.14 5.14" stroke-dashoffset="9.76" fill="none"/><path d="M331.45 187.95L331.45 208.45" stroke="#f0e000" stroke-width="1.5" stroke-dasharray="5.14 5.14" stroke-dashoffset="9.16" fill="none"/><path d="M331.45 208.45L331.45 228.95" stroke="#f0e000" stroke-width="1.5" stroke-dasharray="5.14 5.14" stroke-dashoffset="9.1" fill="none"/><path d="M331.45 228.95L331.45 249.45" stroke="#f0e000" stroke-width="1.5" stroke-dasharray="5.14 5.14" stroke-dashoffset="9.04" fill="none"/></g><g><path d="M23.95 3.45L44.45 3.45M44.45 3.45L64.95 3.45M64.95 3.45L85.45 3.45M85.45 3.45L105.95 3.45M249.45 3.45L269.95 3.45M269.95 3.45L290.45 3.45M290.45 3.45L310.95 3.45M310.95 3.45L331.45 3.45M3.45 23.95L23.95 23.95M105.95 23.95L126.45 23.95M228.95 23.95L249.45 23.95M3.45 44.45L23.95 44.45M146.95 44.45L167.45 44.45M208.45 44.45L228.95 44.45M126.45 64.95L146.95 64.95M167.45 64.95L187.95 64.95M187.95 64.95L208.45 64.95M3.45 126.45L23.95 126.45M3.45 167.45L23.95 167.45M3.45 187.95L23.95 187.95M310.95 187.95L331.45 187.95M3.45 208.45L23.95 208.45M290.45 208.45L310.95 208.45M23.95 228.95L44.45 228.95M44.45 228.95L64.95 228.95M64.95 228.95L85.45 228.95M85.45 228.95L105.95 228.95M269.95 228.95L290.45 228.95M23.95 249.45L44.45 249.45M44.45 249.45L64.95 249.45M64.95 249.45L85.45 249.45M85.45 249.45L105.95 249.45M249.45 249.45L269.95 249.45M23.95 290.45L44.45 290.45M228.95 290.45L249.45 290.45M44.45 310.95L64.95 310.95M64.95 310.95L85.45 310.95M228.95 310.95L249.45 310.95M85.45 331.45L105.95 331.45M105.95 331.45L126.45 331.45M126.45 331.45L146.95 331.45M146.95 331.45L167.45 331.45M167.45 331.45L187.95 331.45M187.95 331.45L208.45 331.45M208.45 331.45L228.95 331.45M228.95 331.45L249.45 331.45M3.45 23.95L3.45 44.45M3.45 126.45L3.45 146.95M3.45 146.95L3.45 167.45M3.45 187.95L3.45 208.45M23.95 3.45L23.95 23.95M23.95 44.45L23.95 64.95M23.95 64.95L23.95 85.45M23.95 85.45L23.95 105.95M23.95 105.95L23.95 126.45M23.95 167.45L23.95 187.95M23.95 208.45L23.95 228.95M23.95 249.45L23.95 269.95M23.95 269.95L23.95 290.45M44.45 290.45L44.45 310.95M85.45 310.95L85.45 331.45M105.95 3.45L105.95 23.95M105.95 228.95L105.95 249.45M126.45 23.95L126.45 44.45M126.45 44.45L126.45 64.95M146.95 44.45L146.95 64.95M167.45 44.45L167.45 64.95M208.45 44.45L208.45 64.95M228.95 23.95L228.95 44.45M228.95 290.45L228.95 310.95M249.45 3.45L249.45 23.95M249.45 249.45L249.45 269.95M249.45 269.95L249.45 290.45M249.45 310.95L249.45 331.45M269.95 228.95L269.95 249.45M290.45 208.45L290.45 228.95M310.95 187.95L310.95 208.45M331.45 3.45L331.45 23.95M331.45 23.95L331.45 44.45M331.45 44.45L331.45 64.95M331.45 64.95L331.45 85.45M331.45 85.45L331.45 105.95M331.45 105.95L331.45 126.45M331.45 126.45L331.45 146.95M331.45 146.95L331.45 167.45M331.45 167.45L331.45 187.95" stroke="#000" stroke-width="1.5" fill="none"/><path d="M23.95 3.45L44.45 3.45M3.45 23.95L23.95 23.95M3.45 23.95L3.45 44.45M23.95 3.45L23.95 23.95" stroke="#f4f4f4" stroke-width="1.5" stroke-dasharray="5.14 5.14" stroke-dashoffset="7.46" fill="none"/><path d="M44.45 3.45L64.95 3.45M3.45 44.45L23.95 44.45" stroke="#f4f4f4" stroke-width="1.5" stroke-dasharray="5.14 5.14" stroke-dashoffset="7.4" fill="none"/><path d="M64.95 3.45L85.45 3.45M23.95 44.45L23.95 64.95" stroke="#f4f4f4" stroke-width="1.5" stroke-dasharray="5.14 5.14" stroke-dashoffset="7.34" fill="none"/><path d="M85.45 3.45L105.95 3.45M23.95 64.95L23.95 85.45" stroke="#f4f4f4" stroke-width="1.5" stroke-dasharray="5.14 5.14" stroke-dashoffset="7.28" fill="none"/><path d="M249.45 3.45L269.95 3.45M228.95 23.95L249.45 23.95M208.45 44.45L228.95 44.45M187.95 64.95L208.45 64.95M23.95 228.95L44.45 228.95M208.45 44.45L208.45 64.95M228.95 23.95L228.95 44.45M249.45 3.45L249.45 23.95" stroke="#f4f4f4" stroke-width="1.5" stroke-dasharray="5.14 5.14" stroke-dashoffset="6.8" fill="none"/><path d="M269.95 3.45L290.45 3.45M44.45 228.95L64.95 228.95M23.95 249.45L44.45 249.45M23.95 249.45L23.95 269.95" stroke="#f4f4f4" stroke-width="1.5" stroke-dasharray="5.14 5.14" stroke-dashoffset="6.74" fill="none"/><path d="M290.45 3.45L310.95 3.45M64.95 228.95L85.45 228.95M44.45 249.45L64.95 249.45M23.95 269.95L23.95 290.45" stroke="#f4f4f4" stroke-width="1.5" stroke-dasharray="5.14 5.14" stroke-dashoffset="6.68" fill="none"/><path d="M310.95 3.45L331.45 3.45M85.45 228.95L105.95 228.95M64.95 249.45L85.45 249.45M23.95 290.45L44.45 290.45" stroke="#f4f4f4" stroke-width="1.5" stroke-dasharray="5.14 5.14" stroke-dashoffset="6.62" fill="none"/><path d="M105.95 23.95L126.45 23.95M3.45 126.45L23.95 126.45M3.45 126.45L3.45 146.95M23.95 105.95L23.95 126.45" stroke="#f4f4f4" stroke-width="1.5" stroke-dasharray="5.14 5.14" stroke-dashoffset="7.16" fill="none"/><path d="M146.95 44.45L167.45 44.45M126.45 64.95L146.95 64.95M3.45 187.95L23.95 187.95M3.45 187.95L3.45 208.45M23.95 167.45L23.95 187.95M146.95 44.45L146.95 64.95" stroke="#f4f4f4" stroke-width="1.5" stroke-dasharray="5.14 5.14" stroke-dashoffset="6.98" fill="none"/><path d="M167.45 64.95L187.95 64.95M23.95 208.45L23.95 228.95" stroke="#f4f4f4" stroke-width="1.5" stroke-dasharray="5.14 5.14" stroke-dashoffset="6.86" fill="none"/><path d="M3.45 167.45L23.95 167.45M126.45 44.45L126.45 64.95" stroke="#f4f4f4" stroke-width="1.5" stroke-dasharray="5.14 5.14" stroke-dashoffset="7.04" fill="none"/><path d="M310.95 187.95L331.45 187.95M290.45 208.45L310.95 208.45M269.95 228.95L290.45 228.95M249.45 249.45L269.95 249.45M167.45 331.45L187.95 331.45M249.45 249.45L249.45 269.95M269.95 228.95L269.95 249.45M290.45 208.45L290.45 228.95M310.95 187.95L310.95 208.45M331.45 167.45L331.45 187.95" stroke="#f4f4f4" stroke-width="1.5" stroke-dasharray="5.14 5.14" stroke-dashoffset="6.08" fill="none"/><path d="M3.45 208.45L23.95 208.45M167.45 44.45L167.45 64.95" stroke="#f4f4f4" stroke-width="1.5" stroke-dasharray="5.14 5.14" stroke-dashoffset="6.92" fill="none"/><path d="M85.45 249.45L105.95 249.45M44.45 290.45L44.45 310.95M105.95 228.95L105.95 249.45M331.45 3.45L331.45 23.95" stroke="#f4f4f4" stroke-width="1.5" stroke-dasharray="5.14 5.14" stroke-dashoffset="6.56" fill="none"/><path d="M228.95 290.45L249.45 290.45M187.95 331.45L208.45 331.45M228.95 290.45L228.95 310.95M249.45 269.95L249.45 290.45" stroke="#f4f4f4" stroke-width="1.5" stroke-dasharray="5.14 5.14" stroke-dashoffset="6.02" fill="none"/><path d="M44.45 310.95L64.95 310.95M331.45 23.95L331.45 44.45" stroke="#f4f4f4" stroke-width="1.5" stroke-dasharray="5.14 5.14" stroke-dashoffset="6.5" fill="none"/><path d="M64.95 310.95L85.45 310.95M331.45 44.45L331.45 64.95" stroke="#f4f4f4" stroke-width="1.5" stroke-dasharray="5.14 5.14" stroke-dashoffset="6.44" fill="none"/><path d="M228.95 310.95L249.45 310.95M208.45 331.45L228.95 331.45" stroke="#f4f4f4" stroke-width="1.5" stroke-dasharray="5.14 5.14" stroke-dashoffset="5.96" fill="none"/><path d="M85.45 331.45L105.95 331.45M331.45 85.45L331.45 105.95" stroke="#f4f4f4" stroke-width="1.5" stroke-dasharray="5.14 5.14" stroke-dashoffset="6.32" fill="none"/><path d="M105.95 331.45L126.45 331.45M331.45 105.95L331.45 126.45" stroke="#f4f4f4" stroke-width="1.5" stroke-dasharray="5.14 5.14" stroke-dashoffset="6.26" fill="none"/><path d="M126.45 331.45L146.95 331.45M331.45 126.45L331.45 146.95" stroke="#f4f4f4" stroke-width="1.5" stroke-dasharray="5.14 5.14" stroke-dashoffset="6.2" fill="none"/><path d="M146.95 331.45L167.45 331.45M331.45 146.95L331.45 167.45" stroke="#f4f4f4" stroke-width="1.5" stroke-dasharray="5.14 5.14" stroke-dashoffset="6.14" fill="none"/><path d="M228.95 331.45L249.45 331.45M249.45 310.95L249.45 331.45" stroke="#f4f4f4" stroke-width="1.5" stroke-dasharray="5.14 5.14" stroke-dashoffset="5.9" fill="none"/><path d="M3.45 146.95L3.45 167.45M126.45 23.95L126.45 44.45" stroke="#f4f4f4" stroke-width="1.5" stroke-dasharray="5.14 5.14" stroke-dashoffset="7.1" fill="none"/><path d="M23.95 85.45L23.95 105.95M105.95 3.45L105.95 23.95" stroke="#f4f4f4" stroke-width="1.5" stroke-dasharray="5.14 5.14" stroke-dashoffset="7.22" fill="none"/><path d="M85.45 310.95L85.45 331.45M331.45 64.95L331.45 85.45" stroke="#f4f4f4" stroke-width="1.5" stroke-dasharray="5.14 5.14" stroke-dashoffset="6.38" fill="none"/></g></svg><div class="shadow"></div><svg class="dsvg" width="1200" height="761" font-family='"Liberation Sans", sans-serif'><rect x="174" y="226" width="492.8" height="412.6" fill="#363636"/><rect x="175.2" y="227.2" width="489.9" height="409.6" fill="#464646"/><rect x="174.5" y="194" width="491.4" height="32" fill="#ffffff"/><g transform="translate(177 198)"><polygon points="3.5,3.5 12.6,3.5 12.6,12.6 3.5,12.8" fill="#8e8e8e"/><polygon points="12.6,4.5 21.5,2 21.5,12.6 12.6,12.6" fill="#c4c4c4"/><rect x="4.1" y="4.1" width="2.8" height="3.5" fill="#a07878"/><circle cx="7.4" cy="10.7" r="1" fill="#c8f046"/><circle cx="13.6" cy="7.3" r="0.9" fill="#555"/><circle cx="17.4" cy="10.7" r="0.8" fill="#666"/><circle cx="18.6" cy="7.3" r="0.8" fill="#a08080"/><polygon points="3.2,12.6 20.5,12.6 20.5,16.4 3.2,16.4" fill="#d0d0d0"/><polygon points="1.9,1.3 8.2,1.3 8.6,3.5 11.7,3.8 11.7,6 8.2,6 7,3.5 3.5,3.5 3.5,13.9 1.6,13.9 1.6,3.5" fill="#000"/><path d="M14.2 4.6L22 1.6" stroke="#000" stroke-width="2.2"/><rect x="20.2" y="9.5" width="1.8" height="4.4" fill="#000"/><polygon points="3.2,17 10.4,17.5 10.4,21.5 4,21.3" fill="#111"/><path d="M4 13.6L8.8 17.7" stroke="#000" stroke-width="1.3"/><path d="M12.3 21L14.6 18.2L16.8 21.2M13 20.5H16" stroke="#111" stroke-width="1.6" fill="none"/><rect x="12" y="13.9" width="1.2" height="3.1" fill="#000"/><rect x="15.8" y="15.1" width="1.9" height="1.9" fill="#000"/></g><text x="205.8" y="214.6" font-size="14.5" fill="#000" font-weight="normal" text-anchor="start" textLength="80.5" lengthAdjust="spacingAndGlyphs">Scale Image</text><path d="M640 203.2L653 216.2M653 203.2L640 216.2" stroke="#1a1a1a" stroke-width="1.25"/><path d="M180.4 231.8L186.6 238" stroke="#c8c8c8" stroke-width="2.8"/><path d="M179.5 237.8H187.5V231" stroke="#c8c8c8" stroke-width="2.3" fill="none"/><rect x="187.7" y="238.9" width="20.5" height="20.8" fill="#c6c6c6"/><rect x="190" y="241.8" width="15.8" height="11.6" fill="#4a4a4a"/><rect x="191.2" y="243.2" width="13.4" height="9" fill="#5c5c5c"/><path d="M196.5 243.5L199.5 248.5L202.5 243.5M199.5 248V252.3M192 252.3L194.2 249L196.4 252.3" stroke="#4e4e4e" stroke-width="1.3" fill="none"/><text x="217.3" y="250.7" font-size="21.5" fill="#e6e6e6" font-weight="bold" text-anchor="start" textLength="128" lengthAdjust="spacingAndGlyphs">Scale Image</text><rect x="278.9" y="234.9" width="9.2" height="2" fill="#e6e6e6"/><rect x="278.9" y="248.8" width="9.2" height="2" fill="#e6e6e6"/><text x="217.2" y="268.3" font-size="14.5" fill="#d6d6d6" font-weight="normal" text-anchor="start" textLength="58.5" lengthAdjust="spacingAndGlyphs">Cat.xcf-1</text><rect x="615.5" y="230" width="43.5" height="43.8" fill="#111"/><g transform="translate(616.5,231) scale(2.6)"><rect x="0" y="0" width="16" height="16" fill="#666"/><rect x="0" y="0" width="1.02" height="1.02" fill="#999"/><rect x="2" y="0" width="1.02" height="1.02" fill="#999"/><rect x="4" y="0" width="1.02" height="1.02" fill="#999"/><rect x="6" y="0" width="1.02" height="1.02" fill="#999"/><rect x="8" y="0" width="1.02" height="1.02" fill="#999"/><rect x="10" y="0" width="1.02" height="1.02" fill="#999"/><rect x="12" y="0" width="1.02" height="1.02" fill="#999"/><rect x="14" y="0" width="1.02" height="1.02" fill="#999"/><rect x="1" y="1" width="1.02" height="1.02" fill="#999"/><rect x="3" y="1" width="1.02" height="1.02" fill="#999"/><rect x="5" y="1" width="1.02" height="1.02" fill="#999"/><rect x="7" y="1" width="1.02" height="1.02" fill="#999"/><rect x="9" y="1" width="1.02" height="1.02" fill="#999"/><rect x="11" y="1" width="1.02" height="1.02" fill="#999"/><rect x="13" y="1" width="1.02" height="1.02" fill="#999"/><rect x="15" y="1" width="1.02" height="1.02" fill="#999"/><rect x="0" y="2" width="1.02" height="1.02" fill="#999"/><rect x="2" y="2" width="1.02" height="1.02" fill="#999"/><rect x="4" y="2" width="1.02" height="1.02" fill="#999"/><rect x="6" y="2" width="1.02" height="1.02" fill="#999"/><rect x="8" y="2" width="1.02" height="1.02" fill="#999"/><rect x="10" y="2" width="1.02" height="1.02" fill="#999"/><rect x="12" y="2" width="1.02" height="1.02" fill="#999"/><rect x="14" y="2" width="1.02" height="1.02" fill="#999"/><rect x="1" y="3" width="1.02" height="1.02" fill="#999"/><rect x="3" y="3" width="1.02" height="1.02" fill="#999"/><rect x="5" y="3" width="1.02" height="1.02" fill="#999"/><rect x="7" y="3" width="1.02" height="1.02" fill="#999"/><rect x="9" y="3" width="1.02" height="1.02" fill="#999"/><rect x="11" y="3" width="1.02" height="1.02" fill="#999"/><rect x="13" y="3" width="1.02" height="1.02" fill="#999"/><rect x="15" y="3" width="1.02" height="1.02" fill="#999"/><rect x="0" y="4" width="1.02" height="1.02" fill="#999"/><rect x="2" y="4" width="1.02" height="1.02" fill="#999"/><rect x="4" y="4" width="1.02" height="1.02" fill="#999"/><rect x="6" y="4" width="1.02" height="1.02" fill="#999"/><rect x="8" y="4" width="1.02" height="1.02" fill="#999"/><rect x="10" y="4" width="1.02" height="1.02" fill="#999"/><rect x="12" y="4" width="1.02" height="1.02" fill="#999"/><rect x="14" y="4" width="1.02" height="1.02" fill="#999"/><rect x="1" y="5" width="1.02" height="1.02" fill="#999"/><rect x="3" y="5" width="1.02" height="1.02" fill="#999"/><rect x="5" y="5" width="1.02" height="1.02" fill="#999"/><rect x="7" y="5" width="1.02" height="1.02" fill="#999"/><rect x="9" y="5" width="1.02" height="1.02" fill="#999"/><rect x="11" y="5" width="1.02" height="1.02" fill="#999"/><rect x="13" y="5" width="1.02" height="1.02" fill="#999"/><rect x="15" y="5" width="1.02" height="1.02" fill="#999"/><rect x="0" y="6" width="1.02" height="1.02" fill="#999"/><rect x="2" y="6" width="1.02" height="1.02" fill="#999"/><rect x="4" y="6" width="1.02" height="1.02" fill="#999"/><rect x="6" y="6" width="1.02" height="1.02" fill="#999"/><rect x="8" y="6" width="1.02" height="1.02" fill="#999"/><rect x="10" y="6" width="1.02" height="1.02" fill="#999"/><rect x="12" y="6" width="1.02" height="1.02" fill="#999"/><rect x="14" y="6" width="1.02" height="1.02" fill="#999"/><rect x="1" y="7" width="1.02" height="1.02" fill="#999"/><rect x="3" y="7" width="1.02" height="1.02" fill="#999"/><rect x="5" y="7" width="1.02" height="1.02" fill="#999"/><rect x="7" y="7" width="1.02" height="1.02" fill="#999"/><rect x="9" y="7" width="1.02" height="1.02" fill="#999"/><rect x="11" y="7" width="1.02" height="1.02" fill="#999"/><rect x="13" y="7" width="1.02" height="1.02" fill="#999"/><rect x="15" y="7" width="1.02" height="1.02" fill="#999"/><rect x="0" y="8" width="1.02" height="1.02" fill="#999"/><rect x="2" y="8" width="1.02" height="1.02" fill="#999"/><rect x="4" y="8" width="1.02" height="1.02" fill="#999"/><rect x="6" y="8" width="1.02" height="1.02" fill="#999"/><rect x="8" y="8" width="1.02" height="1.02" fill="#999"/><rect x="10" y="8" width="1.02" height="1.02" fill="#999"/><rect x="12" y="8" width="1.02" height="1.02" fill="#999"/><rect x="14" y="8" width="1.02" height="1.02" fill="#999"/><rect x="1" y="9" width="1.02" height="1.02" fill="#999"/><rect x="3" y="9" width="1.02" height="1.02" fill="#999"/><rect x="5" y="9" width="1.02" height="1.02" fill="#999"/><rect x="7" y="9" width="1.02" height="1.02" fill="#999"/><rect x="9" y="9" width="1.02" height="1.02" fill="#999"/><rect x="11" y="9" width="1.02" height="1.02" fill="#999"/><rect x="13" y="9" width="1.02" height="1.02" fill="#999"/><rect x="15" y="9" width="1.02" height="1.02" fill="#999"/><rect x="0" y="10" width="1.02" height="1.02" fill="#999"/><rect x="2" y="10" width="1.02" height="1.02" fill="#999"/><rect x="4" y="10" width="1.02" height="1.02" fill="#999"/><rect x="6" y="10" width="1.02" height="1.02" fill="#999"/><rect x="8" y="10" width="1.02" height="1.02" fill="#999"/><rect x="10" y="10" width="1.02" height="1.02" fill="#999"/><rect x="12" y="10" width="1.02" height="1.02" fill="#999"/><rect x="14" y="10" width="1.02" height="1.02" fill="#999"/><rect x="1" y="11" width="1.02" height="1.02" fill="#999"/><rect x="3" y="11" width="1.02" height="1.02" fill="#999"/><rect x="5" y="11" width="1.02" height="1.02" fill="#999"/><rect x="7" y="11" width="1.02" height="1.02" fill="#999"/><rect x="9" y="11" width="1.02" height="1.02" fill="#999"/><rect x="11" y="11" width="1.02" height="1.02" fill="#999"/><rect x="13" y="11" width="1.02" height="1.02" fill="#999"/><rect x="15" y="11" width="1.02" height="1.02" fill="#999"/><rect x="0" y="12" width="1.02" height="1.02" fill="#999"/><rect x="2" y="12" width="1.02" height="1.02" fill="#999"/><rect x="4" y="12" width="1.02" height="1.02" fill="#999"/><rect x="6" y="12" width="1.02" height="1.02" fill="#999"/><rect x="8" y="12" width="1.02" height="1.02" fill="#999"/><rect x="10" y="12" width="1.02" height="1.02" fill="#999"/><rect x="12" y="12" width="1.02" height="1.02" fill="#999"/><rect x="14" y="12" width="1.02" height="1.02" fill="#999"/><rect x="1" y="13" width="1.02" height="1.02" fill="#999"/><rect x="3" y="13" width="1.02" height="1.02" fill="#999"/><rect x="5" y="13" width="1.02" height="1.02" fill="#999"/><rect x="7" y="13" width="1.02" height="1.02" fill="#999"/><rect x="9" y="13" width="1.02" height="1.02" fill="#999"/><rect x="11" y="13" width="1.02" height="1.02" fill="#999"/><rect x="13" y="13" width="1.02" height="1.02" fill="#999"/><rect x="15" y="13" width="1.02" height="1.02" fill="#999"/><rect x="0" y="14" width="1.02" height="1.02" fill="#999"/><rect x="2" y="14" width="1.02" height="1.02" fill="#999"/><rect x="4" y="14" width="1.02" height="1.02" fill="#999"/><rect x="6" y="14" width="1.02" height="1.02" fill="#999"/><rect x="8" y="14" width="1.02" height="1.02" fill="#999"/><rect x="10" y="14" width="1.02" height="1.02" fill="#999"/><rect x="12" y="14" width="1.02" height="1.02" fill="#999"/><rect x="14" y="14" width="1.02" height="1.02" fill="#999"/><rect x="1" y="15" width="1.02" height="1.02" fill="#999"/><rect x="3" y="15" width="1.02" height="1.02" fill="#999"/><rect x="5" y="15" width="1.02" height="1.02" fill="#999"/><rect x="7" y="15" width="1.02" height="1.02" fill="#999"/><rect x="9" y="15" width="1.02" height="1.02" fill="#999"/><rect x="11" y="15" width="1.02" height="1.02" fill="#999"/><rect x="13" y="15" width="1.02" height="1.02" fill="#999"/><rect x="15" y="15" width="1.02" height="1.02" fill="#999"/><rect x="1" y="0" width="4.02" height="1.02" fill="#000000"/><rect x="12" y="0" width="2.02" height="1.02" fill="#000000"/><rect x="14" y="0" width="1.02" height="1.02" fill="#505050"/><rect x="15" y="0" width="1.02" height="1.02" fill="#000000"/><rect x="0" y="1" width="1.02" height="1.02" fill="#000000"/><rect x="1" y="1" width="4.02" height="1.02" fill="#505050"/><rect x="5" y="1" width="1.02" height="1.02" fill="#000000"/><rect x="11" y="1" width="1.02" height="1.02" fill="#000000"/><rect x="12" y="1" width="3.02" height="1.02" fill="#505050"/><rect x="15" y="1" width="1.02" height="1.02" fill="#000000"/><rect x="1" y="2" width="1.02" height="1.02" fill="#000000"/><rect x="2" y="2" width="1.02" height="1.02" fill="#9a7a78"/><rect x="3" y="2" width="2.02" height="1.02" fill="#505050"/><rect x="5" y="2" width="1.02" height="1.02" fill="#727272"/><rect x="6" y="2" width="2.02" height="1.02" fill="#000000"/><rect x="10" y="2" width="1.02" height="1.02" fill="#000000"/><rect x="11" y="2" width="2.02" height="1.02" fill="#727272"/><rect x="13" y="2" width="1.02" height="1.02" fill="#505050"/><rect x="14" y="2" width="1.02" height="1.02" fill="#9a7a78"/><rect x="15" y="2" width="1.02" height="1.02" fill="#000000"/><rect x="1" y="3" width="1.02" height="1.02" fill="#000000"/><rect x="2" y="3" width="2.02" height="1.02" fill="#9a7a78"/><rect x="4" y="3" width="2.02" height="1.02" fill="#727272"/><rect x="6" y="3" width="1.02" height="1.02" fill="#000000"/><rect x="7" y="3" width="1.02" height="1.02" fill="#727272"/><rect x="8" y="3" width="2.02" height="1.02" fill="#000000"/><rect x="10" y="3" width="3.02" height="1.02" fill="#727272"/><rect x="13" y="3" width="2.02" height="1.02" fill="#9a7a78"/><rect x="15" y="3" width="1.02" height="1.02" fill="#000000"/><rect x="1" y="4" width="1.02" height="1.02" fill="#000000"/><rect x="2" y="4" width="1.02" height="1.02" fill="#7c5e5e"/><rect x="3" y="4" width="1.02" height="1.02" fill="#9a7a78"/><rect x="4" y="4" width="4.02" height="1.02" fill="#727272"/><rect x="8" y="4" width="2.02" height="1.02" fill="#505050"/><rect x="10" y="4" width="3.02" height="1.02" fill="#727272"/><rect x="13" y="4" width="1.02" height="1.02" fill="#9a7a78"/><rect x="14" y="4" width="1.02" height="1.02" fill="#7c5e5e"/><rect x="15" y="4" width="1.02" height="1.02" fill="#000000"/><rect x="0" y="5" width="2.02" height="1.02" fill="#000000"/><rect x="2" y="5" width="14.02" height="1.02" fill="#727272"/><rect x="0" y="6" width="1.02" height="1.02" fill="#000000"/><rect x="1" y="6" width="3.02" height="1.02" fill="#727272"/><rect x="4" y="6" width="2.02" height="1.02" fill="#c8f046"/><rect x="6" y="6" width="1.02" height="1.02" fill="#000000"/><rect x="7" y="6" width="2.02" height="1.02" fill="#727272"/><rect x="9" y="6" width="2.02" height="1.02" fill="#c8f046"/><rect x="11" y="6" width="1.02" height="1.02" fill="#000000"/><rect x="12" y="6" width="3.02" height="1.02" fill="#727272"/><rect x="15" y="6" width="1.02" height="1.02" fill="#000000"/><rect x="0" y="7" width="1.02" height="1.02" fill="#000000"/><rect x="1" y="7" width="1.02" height="1.02" fill="#505050"/><rect x="2" y="7" width="2.02" height="1.02" fill="#727272"/><rect x="4" y="7" width="1.02" height="1.02" fill="#c8f046"/><rect x="5" y="7" width="1.02" height="1.02" fill="#a6d470"/><rect x="6" y="7" width="1.02" height="1.02" fill="#000000"/><rect x="7" y="7" width="1.02" height="1.02" fill="#727272"/><rect x="8" y="7" width="1.02" height="1.02" fill="#d3d3d3"/><rect x="9" y="7" width="1.02" height="1.02" fill="#c8f046"/><rect x="10" y="7" width="1.02" height="1.02" fill="#a6d470"/><rect x="11" y="7" width="1.02" height="1.02" fill="#000000"/><rect x="12" y="7" width="4.02" height="1.02" fill="#727272"/><rect x="0" y="8" width="2.02" height="1.02" fill="#000000"/><rect x="2" y="8" width="1.02" height="1.02" fill="#505050"/><rect x="3" y="8" width="4.02" height="1.02" fill="#727272"/><rect x="7" y="8" width="2.02" height="1.02" fill="#d3d3d3"/><rect x="9" y="8" width="1.02" height="1.02" fill="#9a7a78"/><rect x="10" y="8" width="3.02" height="1.02" fill="#d3d3d3"/><rect x="13" y="8" width="2.02" height="1.02" fill="#727272"/><rect x="15" y="8" width="1.02" height="1.02" fill="#000000"/><rect x="0" y="9" width="1.02" height="1.02" fill="#000000"/><rect x="1" y="9" width="1.02" height="1.02" fill="#727272"/><rect x="2" y="9" width="1.02" height="1.02" fill="#c4c4c4"/><rect x="3" y="9" width="6.02" height="1.02" fill="#d3d3d3"/><rect x="9" y="9" width="1.02" height="1.02" fill="#000000"/><rect x="10" y="9" width="4.02" height="1.02" fill="#d3d3d3"/><rect x="14" y="9" width="2.02" height="1.02" fill="#000000"/><rect x="1" y="10" width="2.02" height="1.02" fill="#000000"/><rect x="3" y="10" width="3.02" height="1.02" fill="#c4c4c4"/><rect x="6" y="10" width="2.02" height="1.02" fill="#d3d3d3"/><rect x="8" y="10" width="1.02" height="1.02" fill="#000000"/><rect x="9" y="10" width="4.02" height="1.02" fill="#d3d3d3"/><rect x="13" y="10" width="2.02" height="1.02" fill="#000000"/><rect x="3" y="11" width="1.02" height="1.02" fill="#000000"/><rect x="5" y="11" width="1.02" height="1.02" fill="#000000"/><rect x="6" y="11" width="1.02" height="1.02" fill="#c4c4c4"/><rect x="7" y="11" width="3.02" height="1.02" fill="#727272"/><rect x="10" y="11" width="1.02" height="1.02" fill="#a6a6a6"/><rect x="11" y="11" width="2.02" height="1.02" fill="#000000"/><rect x="1" y="12" width="3.02" height="1.02" fill="#505050"/><rect x="4" y="12" width="1.02" height="1.02" fill="#000000"/><rect x="5" y="12" width="2.02" height="1.02" fill="#c4c4c4"/><rect x="7" y="12" width="2.02" height="1.02" fill="#727272"/><rect x="9" y="12" width="1.02" height="1.02" fill="#d3d3d3"/><rect x="10" y="12" width="2.02" height="1.02" fill="#a6a6a6"/><rect x="1" y="13" width="1.02" height="1.02" fill="#000000"/><rect x="2" y="13" width="3.02" height="1.02" fill="#505050"/><rect x="5" y="13" width="1.02" height="1.02" fill="#c4c4c4"/><rect x="6" y="13" width="1.02" height="1.02" fill="#000000"/><rect x="7" y="13" width="1.02" height="1.02" fill="#727272"/><rect x="8" y="13" width="2.02" height="1.02" fill="#d3d3d3"/><rect x="10" y="13" width="1.02" height="1.02" fill="#000000"/><rect x="11" y="13" width="1.02" height="1.02" fill="#a6a6a6"/><rect x="1" y="14" width="3.02" height="1.02" fill="#000000"/><rect x="4" y="14" width="3.02" height="1.02" fill="#505050"/><rect x="7" y="14" width="3.02" height="1.02" fill="#d3d3d3"/><rect x="10" y="14" width="1.02" height="1.02" fill="#000000"/><rect x="2" y="15" width="1.02" height="1.02" fill="#505050"/><rect x="3" y="15" width="3.02" height="1.02" fill="#000000"/><rect x="6" y="15" width="2.02" height="1.02" fill="#d3d3d3"/><rect x="8" y="15" width="2.02" height="1.02" fill="#000000"/><rect x="10" y="15" width="1.02" height="1.02" fill="#c4c4c4"/><rect x="11" y="15" width="1.02" height="1.02" fill="#000000"/></g><rect x="175.2" y="276" width="489.8" height="1.8" fill="#373737"/><text x="196.9" y="310" font-size="16" fill="#dedede" font-weight="bold" text-anchor="start" textLength="83.5" lengthAdjust="spacingAndGlyphs">mage Size</text><rect x="192.1" y="297.9" width="3.8" height="11.8" fill="#dedede"/><rect x="190.1" y="297.9" width="7.7" height="1.7" fill="#dedede"/><rect x="190.1" y="308" width="7.7" height="1.7" fill="#dedede"/><text x="210.5" y="337.8" font-size="16.3" fill="#d4d4d4" font-weight="normal" text-anchor="start" textLength="50" lengthAdjust="spacingAndGlyphs">Width:</text><text x="211.2" y="372.8" font-size="16.3" fill="#d4d4d4" font-weight="normal" text-anchor="start" textLength="51.8" lengthAdjust="spacingAndGlyphs">Height:</text><rect x="315" y="316.2" width="82.5" height="31" fill="#2c2c2c"/><rect x="317.6" y="319.2" width="79.9" height="25.4" fill="#1e1e1e"/><rect x="320" y="321.59999999999997" width="35.8" height="20.3" fill="#3b3b3b"/><clipPath id="clip315316.2"><rect x="317.6" y="319.2" width="77.4" height="25.4"/></clipPath><g clip-path="url(#clip315316.2)"><text x="321" y="338.3" font-size="16" fill="#e2e2e2" font-weight="normal" text-anchor="start">1024</text></g><rect x="397.1" y="316.7" width="17.6" height="30.7" fill="#171717"/><rect x="398.1" y="317.7" width="15.6" height="13.7" fill="#1f1f1f"/><rect x="398.1" y="332.4" width="15.6" height="13.5" fill="#1f1f1f"/><polygon points="400.70000000000005,327.2 410.1,327.2 405.40000000000003,320.8" fill="#d4d4d4"/><polygon points="400.70000000000005,336.0 410.1,336.0 405.40000000000003,342.3" fill="#d4d4d4"/><rect x="315" y="351" width="82.5" height="31" fill="#2c2c2c"/><rect x="317.6" y="354" width="79.9" height="25.4" fill="#1e1e1e"/><clipPath id="clip315351"><rect x="317.6" y="354" width="77.4" height="25.4"/></clipPath><g clip-path="url(#clip315351)"><text x="321" y="373.1" font-size="16" fill="#e2e2e2" font-weight="normal" text-anchor="start">1024</text></g><rect x="397.1" y="351.5" width="17.6" height="30.7" fill="#171717"/><rect x="398.1" y="352.5" width="15.6" height="13.7" fill="#1f1f1f"/><rect x="398.1" y="367.2" width="15.6" height="13.5" fill="#1f1f1f"/><polygon points="400.70000000000005,362 410.1,362 405.40000000000003,355.6" fill="#d4d4d4"/><polygon points="400.70000000000005,370.8 410.1,370.8 405.40000000000003,377.1" fill="#d4d4d4"/><path d="M427.9 324.0H433.2V331.6" stroke="#c4c4c4" stroke-width="2.5" fill="none"/><rect x="425.9" y="342.90000000000003" width="13.0" height="16.5" rx="3.4" stroke="#c4c4c4" stroke-width="3.4" fill="none"/><path d="M432.4 338.5V347.8M432.4 355.3V363.6" stroke="#c4c4c4" stroke-width="2.7" fill="none"/><path d="M433.2 369.3V376.8H427.9" stroke="#c4c4c4" stroke-width="2.5" fill="none"/><rect x="456.6" y="347.4" width="65.8" height="37.5" rx="3.5" fill="#2c2c2c" stroke="#1b1b1b" stroke-width="1.2"/><text x="465.3" y="373" font-size="16" fill="#d6d6d6" font-weight="normal" text-anchor="start">px</text><path d="M498.9 362L506.04999999999995 368L513.1999999999999 362" stroke="#e8e8e8" stroke-width="2.1" fill="none"/><text x="316.2" y="399.7" font-size="14.5" fill="#d8d8d8" font-weight="normal" text-anchor="start" textLength="116" lengthAdjust="spacingAndGlyphs">1024 × 1024 pixels</text><text x="210.5" y="432.2" font-size="16.3" fill="#d4d4d4" font-weight="normal" text-anchor="start" textLength="95.5" lengthAdjust="spacingAndGlyphs">X resolution:</text><text x="210.5" y="466.8" font-size="16.3" fill="#d4d4d4" font-weight="normal" text-anchor="start" textLength="95.5" lengthAdjust="spacingAndGlyphs">Y resolution:</text><rect x="315" y="410.2" width="82.5" height="31" fill="#2c2c2c"/><rect x="317.6" y="413.2" width="79.9" height="25.4" fill="#1e1e1e"/><clipPath id="clip315410.2"><rect x="317.6" y="413.2" width="77.4" height="25.4"/></clipPath><g clip-path="url(#clip315410.2)"><text x="321" y="432.3" font-size="16" fill="#e2e2e2" font-weight="normal" text-anchor="start">30000.000</text></g><rect x="397.1" y="410.7" width="17.6" height="30.7" fill="#171717"/><rect x="398.1" y="411.7" width="15.6" height="13.7" fill="#1f1f1f"/><rect x="398.1" y="426.4" width="15.6" height="13.5" fill="#1f1f1f"/><polygon points="400.70000000000005,421.2 410.1,421.2 405.40000000000003,414.8" fill="#d4d4d4"/><polygon points="400.70000000000005,430.0 410.1,430.0 405.40000000000003,436.3" fill="#d4d4d4"/><rect x="315" y="445" width="82.5" height="31" fill="#2c2c2c"/><rect x="317.6" y="448" width="79.9" height="25.4" fill="#1e1e1e"/><clipPath id="clip315445"><rect x="317.6" y="448" width="77.4" height="25.4"/></clipPath><g clip-path="url(#clip315445)"><text x="321" y="467.1" font-size="16" fill="#e2e2e2" font-weight="normal" text-anchor="start">30000.000</text></g><rect x="397.1" y="445.5" width="17.6" height="30.7" fill="#171717"/><rect x="398.1" y="446.5" width="15.6" height="13.7" fill="#1f1f1f"/><rect x="398.1" y="461.2" width="15.6" height="13.5" fill="#1f1f1f"/><polygon points="400.70000000000005,456 410.1,456 405.40000000000003,449.6" fill="#d4d4d4"/><polygon points="400.70000000000005,464.8 410.1,464.8 405.40000000000003,471.1" fill="#d4d4d4"/><path d="M427.9 418.0H433.2V425.6" stroke="#c4c4c4" stroke-width="2.5" fill="none"/><rect x="425.9" y="436.90000000000003" width="13.0" height="16.5" rx="3.4" stroke="#c4c4c4" stroke-width="3.4" fill="none"/><path d="M432.4 432.5V441.8M432.4 449.3V457.6" stroke="#c4c4c4" stroke-width="2.7" fill="none"/><path d="M433.2 463.3V470.8H427.9" stroke="#c4c4c4" stroke-width="2.5" fill="none"/><rect x="456.6" y="441.2" width="113.3" height="37.5" rx="3.5" fill="#2c2c2c" stroke="#1b1b1b" stroke-width="1.2"/><text x="465.8" y="466.2" font-size="16" fill="#d6d6d6" font-weight="normal" text-anchor="start">pixels/in</text><path d="M547 455.5L553.85 461.7L560.7 455.5" stroke="#e8e8e8" stroke-width="2.1" fill="none"/><text x="190.5" y="511.4" font-size="16" fill="#dedede" font-weight="bold" text-anchor="start" textLength="57.2" lengthAdjust="spacingAndGlyphs">Quality</text><text x="211" y="543.8" font-size="16.3" fill="#d4d4d4" font-weight="normal" text-anchor="start" textLength="99.2" lengthAdjust="spacingAndGlyphs">Interpolation:</text><rect x="318.0" y="518.6" width="331.1" height="37.1" rx="3.5" fill="#2c2c2c" stroke="#1b1b1b" stroke-width="1.2"/><text x="331.8" y="543.8" font-size="16" fill="#d6d6d6" font-weight="normal" text-anchor="start">None</text><path d="M626.4 532.7L633.35 539.0L640.3 532.7" stroke="#e8e8e8" stroke-width="2.1" fill="none"/><rect x="190.5" y="587.9" width="108.2" height="33.7" rx="3.5" fill="#2c2c2c" stroke="#1b1b1b" stroke-width="1.2"/><text x="245" y="610.8" font-size="16" fill="#d6d6d6" font-weight="normal" text-anchor="middle">Help</text><rect x="307.5" y="587.9" width="108.2" height="33.7" rx="3.5" fill="#2c2c2c" stroke="#1b1b1b" stroke-width="1.2"/><text x="361.6" y="610.8" font-size="16" fill="#d6d6d6" font-weight="normal" text-anchor="middle">Reset</text><rect x="424.8" y="587.9" width="108.2" height="33.7" rx="3.5" fill="#2c2c2c" stroke="#1b1b1b" stroke-width="1.2"/><text x="478.7" y="610.8" font-size="16" fill="#d6d6d6" font-weight="normal" text-anchor="middle">Scale</text><rect x="541.5" y="587.9" width="108.2" height="33.7" rx="3.5" fill="#2c2c2c" stroke="#1b1b1b" stroke-width="1.2"/><text x="595.3" y="610.8" font-size="16" fill="#d6d6d6" font-weight="normal" text-anchor="middle">Cancel</text></svg></body></html>
